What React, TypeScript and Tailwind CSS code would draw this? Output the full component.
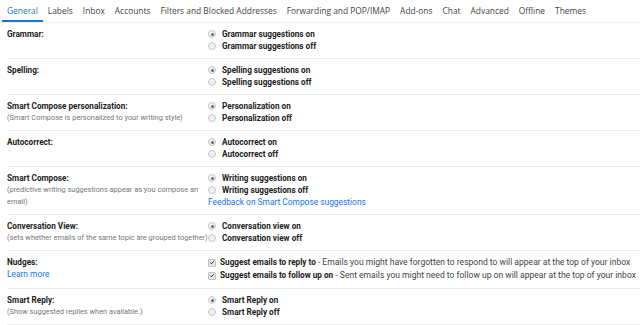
import React from "react";

const tabs = [
  "General",
  "Labels",
  "Inbox",
  "Accounts",
  "Filters and Blocked Addresses",
  "Forwarding and POP/IMAP",
  "Add-ons",
  "Chat",
  "Advanced",
  "Offline",
  "Themes",
];

function Radio({ checked }: { checked?: boolean }) {
  return (
    <span className="mr-[6px] inline-flex h-[8px] w-[8px] shrink-0 items-center justify-center rounded-full border border-[#c8c8c8] bg-[#f1f1f1]">
      {checked && <span className="h-[3px] w-[3px] rounded-full bg-[#666]" />}
    </span>
  );
}

function Check() {
  return (
    <span className="mr-[4px] inline-flex h-[8px] w-[8px] shrink-0 items-center justify-center rounded-[1px] border border-[#c4c4c4] bg-[#e6e6e6]">
      <svg viewBox="0 0 10 10" className="h-[7px] w-[7px]">
        <path d="M2 5.2L4 7.3L8.2 2.5" fill="none" stroke="#333" strokeWidth={1.6} />
      </svg>
    </span>
  );
}

interface RowProps {
  label: string;
  desc?: React.ReactNode;
  children: React.ReactNode;
}

function Row({ label, desc, children }: RowProps) {
  return (
    <div className="ml-[7px] flex border-b border-[#ececec] pt-[5px] pb-[6px]">
      <div className="w-[201px] shrink-0">
        <div className="font-bold text-[#222]">{label}</div>
        {desc && <div className="text-[7.4px] text-[#777]">{desc}</div>}
      </div>
      <div>{children}</div>
    </div>
  );
}

function Opt({ checked, children }: { checked?: boolean; children: React.ReactNode }) {
  return (
    <div className="flex items-center font-bold text-[#222]">
      <Radio checked={checked} />
      {children}
    </div>
  );
}

export default function App() {
  return (
    <div className="h-[325px] w-[640px] overflow-hidden bg-white text-[8.2px] leading-[12px]" style={{ fontFamily: "Roboto, Arial, sans-serif" }}>
      <div className="flex border-b border-[#f0f0f0] pl-[2px] text-[8.4px] text-[#444]" style={{ fontFamily: "'Open Sans', Roboto, sans-serif" }}>
        {tabs.map((t, i) => (
          <div
            key={t}
            className={`px-[5px] pt-[4px] pb-[3px] leading-[13px] ${i === 0 ? "border-b-2 border-[#1a73e8] text-[#1a73e8]" : "border-b-2 border-transparent"}`}
          >
            {t}
          </div>
        ))}
      </div>

      <Row label="Grammar:">
        <Opt checked>Grammar suggestions on</Opt>
        <Opt>Grammar suggestions off</Opt>
      </Row>
      <Row label="Spelling:">
        <Opt checked>Spelling suggestions on</Opt>
        <Opt>Spelling suggestions off</Opt>
      </Row>
      <Row label="Smart Compose personalization:" desc="(Smart Compose is personalized to your writing style)">
        <Opt checked>Personalization on</Opt>
        <Opt>Personalization off</Opt>
      </Row>
      <Row label="Autocorrect:">
        <Opt checked>Autocorrect on</Opt>
        <Opt>Autocorrect off</Opt>
      </Row>
      <Row label="Smart Compose:" desc="(predictive writing suggestions appear as you compose an email)">
        <Opt checked>Writing suggestions on</Opt>
        <Opt>Writing suggestions off</Opt>
        <div className="text-[8.4px] text-[#1a73e8]">Feedback on Smart Compose suggestions</div>
      </Row>
      <Row label="Conversation View:" desc={<span className="whitespace-nowrap">(sets whether emails of the same topic are grouped together)</span>}>
        <Opt checked>Conversation view on</Opt>
        <Opt>Conversation view off</Opt>
      </Row>
      <div className="ml-[7px] flex border-b border-[#ececec] pt-[5px] pb-[6px]">
        <div className="w-[201px] shrink-0">
          <div className="font-bold text-[#222]">Nudges:</div>
          <div className="text-[8.4px] text-[#1a73e8]">Learn more</div>
        </div>
        <div className="whitespace-nowrap leading-[13px]">
          <div className="flex items-center">
            <Check />
            <span className="font-bold text-[#222]">Suggest emails to reply to</span>
            <span className="text-[8.55px] text-[#444]">&nbsp;- Emails you might have forgotten to respond to will appear at the top of your inbox</span>
          </div>
          <div className="flex items-center">
            <Check />
            <span className="font-bold text-[#222]">Suggest emails to follow up on</span>
            <span className="text-[8.55px] text-[#444]">&nbsp;- Sent emails you might need to follow up on will appear at the top of your inbox</span>
          </div>
        </div>
      </div>
      <Row label="Smart Reply:" desc="(Show suggested replies when available.)">
        <Opt checked>Smart Reply on</Opt>
        <Opt>Smart Reply off</Opt>
      </Row>
    </div>
  );
}
